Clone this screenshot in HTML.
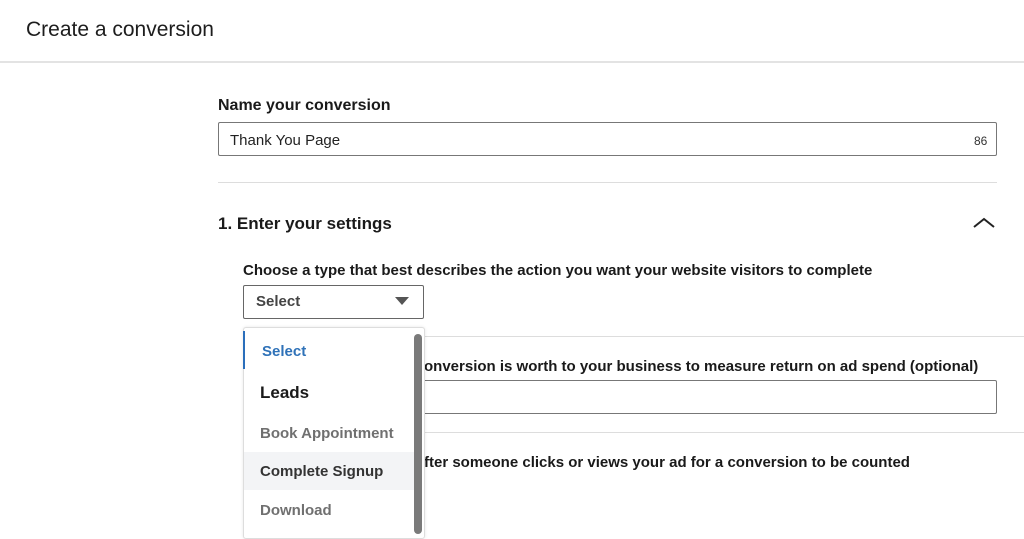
<!DOCTYPE html>
<html><head><style>
body{margin:0;width:1024px;height:530px;overflow:hidden;background:#fff;font-family:"Liberation Sans",Helvetica,Arial,sans-serif;color:#000;position:relative}
.a{position:absolute;white-space:nowrap}
</style></head><body>
<div class="a" style="left:26px;top:18px;font-size:21px;color:#1d1d1d">Create a conversion</div>
<div class="a" style="left:0;top:61px;width:1024px;height:2px;background:#e3e3e3"></div>
<div class="a" style="left:218px;top:97px;font-size:16px;font-weight:bold;color:#1a1a1a">Name your conversion</div>
<div class="a" style="left:218px;top:122px;width:777px;height:32px;border:1px solid #777;border-radius:2px"></div>
<div class="a" style="left:230px;top:132px;font-size:15px;color:#222">Thank You Page</div>
<div class="a" style="left:974px;top:134px;font-size:12px;color:#333">86</div>
<div class="a" style="left:218px;top:182px;width:779px;height:1px;background:#ddd"></div>
<div class="a" style="left:218px;top:214px;font-size:17px;font-weight:bold;color:#1a1a1a">1. Enter your settings</div>
<svg class="a" style="left:972px;top:217px" width="24" height="12"><path d="M2 10 L12 2 L22 10" fill="none" stroke="#222" stroke-width="2"/></svg>
<div class="a" style="left:243px;top:262px;font-size:15px;font-weight:bold;color:#1a1a1a">Choose a type that best describes the action you want your website visitors to complete</div>
<div class="a" style="left:243px;top:285px;width:179px;height:32px;border:1px solid #666;border-radius:2px"></div>
<div class="a" style="left:256px;top:293px;font-size:15px;font-weight:bold;color:#444">Select</div>
<svg class="a" style="left:395px;top:297px" width="14" height="8"><path d="M0 0H14L7 8Z" fill="#555"/></svg>
<div class="a" style="left:424px;top:336px;width:600px;height:1px;background:#ddd"></div>
<div class="a" style="left:424px;top:358px;font-size:15px;font-weight:bold;color:#1a1a1a">onversion is worth to your business to measure return on ad spend (optional)</div>
<div class="a" style="left:420px;top:380px;width:575px;height:32px;border:1px solid #777;border-radius:2px"></div>
<div class="a" style="left:424px;top:432px;width:600px;height:1px;background:#ddd"></div>
<div class="a" style="left:424px;top:454px;font-size:15px;font-weight:bold;color:#1a1a1a">fter someone clicks or views your ad for a conversion to be counted</div>
<div class="a" style="left:243px;top:327px;width:180px;height:210px;background:#fff;border:1px solid #ddd;border-radius:3px;box-shadow:0 0 3px rgba(0,0,0,.1)"></div>
<div class="a" style="left:243px;top:331px;width:2px;height:38px;background:#2a6ebb"></div>
<div class="a" style="left:262px;top:343px;font-size:15px;font-weight:bold;color:#2f72b8">Select</div>
<div class="a" style="left:260px;top:383px;font-size:17px;font-weight:bold;color:#1a1a1a">Leads</div>
<div class="a" style="left:260px;top:425px;font-size:15px;font-weight:bold;color:#707070">Book Appointment</div>
<div class="a" style="left:244px;top:452px;width:170px;height:38px;background:#f3f4f6"></div>
<div class="a" style="left:260px;top:463px;font-size:15px;font-weight:bold;color:#333">Complete Signup</div>
<div class="a" style="left:260px;top:502px;font-size:15px;font-weight:bold;color:#707070">Download</div>
<div class="a" style="left:414px;top:334px;width:8px;height:200px;background:#7a7a7a;border-radius:4px"></div>
</body></html>
